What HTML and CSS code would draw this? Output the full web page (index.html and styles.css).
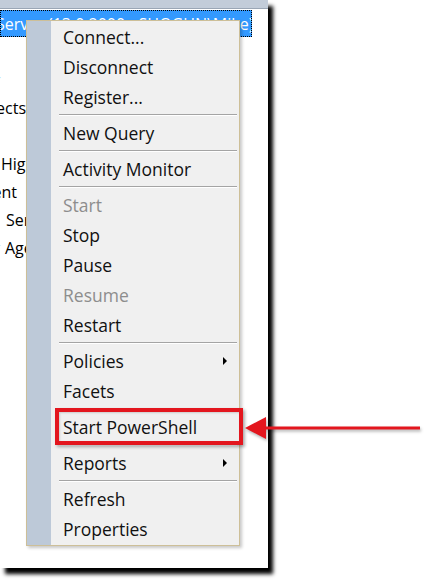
FILE: index.html
```html
<!DOCTYPE html>
<html>
<head>
<meta charset="utf-8">
<title>Object Explorer context menu</title>
<link rel="stylesheet" href="styles.css">
</head>
<body>
<div class="page">
  <div class="screen">
    <div class="strip"></div>
    <div class="tree">
      <div class="row"><div class="selected"><span class="sel-text">Server (13.0.2000 - SHOGUN\Mike)</span></div></div>
      <div class="row"><span class="lead w0">Databases</span></div>
      <div class="row"><span class="lead w0">Security</span></div>
      <div class="row"><span class="lead w26">Server Objects</span></div>
      <div class="row"><span class="lead w0">Replication</span></div>
      <div class="row"><span class="lead w0">Always On</span><span class="tail s1">High Availability</span></div>
      <div class="row"><span class="lead w17">Management</span></div>
      <div class="row"><span class="lead w0">Integration</span><span class="tail s6">Services Catalogs</span></div>
      <div class="row"><span class="lead w0">SQL Server</span><span class="tail s5">Agent</span></div>
    </div>

    <div class="menu">
      <div class="item">Connect...</div>
      <div class="item">Disconnect</div>
      <div class="item">Register...</div>
      <div class="sep"></div>
      <div class="item">New Query</div>
      <div class="sep"></div>
      <div class="item">Activity Monitor</div>
      <div class="sep"></div>
      <div class="item disabled">Start</div>
      <div class="item">Stop</div>
      <div class="item">Pause</div>
      <div class="item disabled">Resume</div>
      <div class="item">Restart</div>
      <div class="sep"></div>
      <div class="item sub">Policies</div>
      <div class="item">Facets</div>
      <div class="sep"></div>
      <div class="item">Start PowerShell</div>
      <div class="sep"></div>
      <div class="item sub">Reports</div>
      <div class="sep"></div>
      <div class="item">Refresh</div>
      <div class="item">Properties</div>
    </div>

    <div class="callout"></div>
  </div>

  <svg class="arrow" width="182" height="28" viewBox="0 0 182 28">
    <polygon points="2,14 23,3 23,25" fill="#e3161e"/>
    <rect x="21" y="12.5" width="156" height="3" fill="#e3161e"/>
  </svg>
</div>
</body>
</html>
```

FILE: styles.css
```css
* {
  box-sizing: border-box;
}

html,
body {
  margin: 0;
  background: #ffffff;
}

body {
  font-family: "Open Sans", "Noto Sans", sans-serif;
}

.page {
  position: relative;
  width: 442px;
  height: 586px;
  overflow: hidden;
}

.screen {
  position: relative;
  width: 268px;
  height: 568px;
  background: #ffffff;
  box-shadow: 5px 6px 4px #000000;
}

.strip {
  height: 9px;
  background: #c2ccd9;
  border-bottom: 1px solid #9aa6b5;
}

.tree {
  padding-top: 1px;
  font-size: 16px;
  color: #000000;
  overflow: hidden;
}

.row {
  height: 28px;
  display: flex;
  align-items: center;
  white-space: pre;
}

.selected {
  width: 252px;
  height: 27px;
  background: #3399ff;
  border: 1px dotted #000000;
  color: #ffffff;
  overflow: hidden;
  display: flex;
  align-items: center;
  margin-top: -1px;
}

.sel-text {
  margin-left: -5px;
  flex: 0 0 auto;
}

.lead {
  display: inline-flex;
  justify-content: flex-end;
  flex: 0 0 auto;
  min-width: 0;
}

.tail {
  flex: 0 0 auto;
}

.w0 { width: 0; }
.w17 { width: 17px; }
.w26 { width: 26px; }

.s1 { margin-left: 1px; }
.s5 { margin-left: 5px; }
.s6 { margin-left: 6px; }

.menu {
  position: absolute;
  left: 26px;
  top: 20px;
  width: 214px;
  border: 1px solid #cdbf98;
  background: linear-gradient(to right, #bdc9d8 24px, #f0f0f0 24px);
  padding-top: 1px;
  padding-bottom: 1px;
  font-size: 17.5px;
  color: #111111;
  box-shadow: 2px 2px 3px rgba(0, 0, 0, 0.22);
}

.item {
  position: relative;
  height: 30px;
  line-height: 30px;
  padding-left: 36px;
  white-space: nowrap;
}

.item.disabled {
  color: #8d8d8d;
}

.item.sub::after {
  content: "";
  position: absolute;
  right: 12px;
  top: 11px;
  border-left: 4px solid #000000;
  border-top: 4px solid transparent;
  border-bottom: 4px solid transparent;
}

.sep {
  height: 6px;
  padding-top: 2px;
  margin: 0 2px 0 32px;
}

.sep::before {
  content: "";
  display: block;
  height: 1px;
  background: #a4a4a4;
  box-shadow: 0 1px 0 #ffffff;
}

.callout {
  position: absolute;
  left: 55px;
  top: 408px;
  width: 188px;
  height: 37px;
  border: 4px solid #e3161e;
  box-shadow: 2px 2px 3px rgba(0, 0, 0, 0.3), inset 1px 1px 2px rgba(0, 0, 0, 0.15);
}

.arrow {
  position: absolute;
  left: 243px;
  top: 414px;
  filter: drop-shadow(1px 2px 1.5px rgba(0, 0, 0, 0.3));
}
```
